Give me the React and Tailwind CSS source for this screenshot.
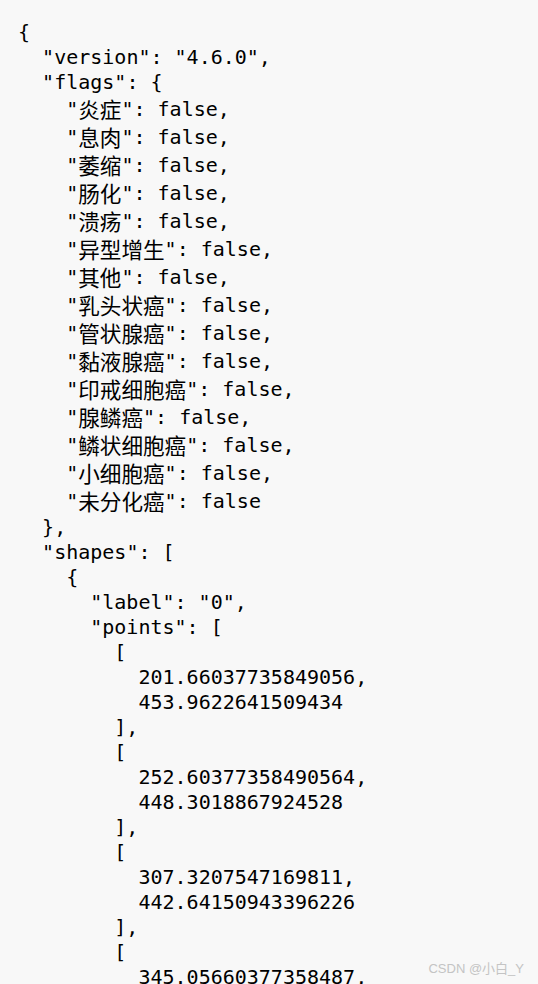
const flags = [
  '炎症',
  '息肉',
  '萎缩',
  '肠化',
  '溃疡',
  '异型增生',
  '其他',
  '乳头状癌',
  '管状腺癌',
  '黏液腺癌',
  '印戒细胞癌',
  '腺鳞癌',
  '鳞状细胞癌',
  '小细胞癌',
  '未分化癌',
]

const tail = [
  [1, '},'],
  [1, '"shapes": ['],
  [2, '{'],
  [3, '"label": "0",'],
  [3, '"points": ['],
  [4, '['],
  [5, '201.66037735849056,'],
  [5, '453.9622641509434'],
  [4, '],'],
  [4, '['],
  [5, '252.60377358490564,'],
  [5, '448.3018867924528'],
  [4, '],'],
  [4, '['],
  [5, '307.3207547169811,'],
  [5, '442.64150943396226'],
  [4, '],'],
  [4, '['],
  [5, '345.05660377358487,'],
]

const indent = (n) => '\u00a0'.repeat(n * 2)

const Line = ({ level, children }) => (
  <div className="h-[25px] leading-[25px] whitespace-pre">
    {indent(level)}
    {children}
  </div>
)

export default function App() {
  return (
    <div className="relative h-[984px] w-[538px] overflow-hidden bg-[#f8f8f8]">
      <div
        className="pl-[18px] pt-[20px] text-[20px] text-[#000000]"
        style={{ fontFamily: '"DejaVu Sans Mono", "Noto Sans CJK SC", monospace' }}
      >
        <Line level={0}>{'{'}</Line>
        <Line level={1}>"version": "4.6.0",</Line>
        <Line level={1}>"flags": {'{'}</Line>
        {flags.map((name, i) => (
          <div key={name} className="flex h-[28px] items-center whitespace-pre">
            {indent(2)}"
            <span className="text-[21.6px]" style={{ fontFamily: '"Noto Sans CJK SC", sans-serif' }}>
              {name}
            </span>
            ": false{i < flags.length - 1 ? ',' : ''}
          </div>
        ))}
        {tail.map(([level, text], i) => (
          <Line key={i} level={level}>
            {text}
          </Line>
        ))}
      </div>

      {/* watermark */}
      <div
        className="absolute bottom-[6px] right-[14px] text-[13px] text-[#c4c4c4]"
        style={{ fontFamily: '"Liberation Sans", "Noto Sans CJK SC", sans-serif' }}
      >
        CSDN @小白_Y
      </div>
    </div>
  )
}
